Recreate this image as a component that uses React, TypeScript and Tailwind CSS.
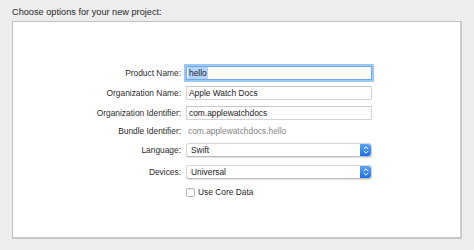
import React from "react";

function Stepper() {
  return (
    <div className="flex h-full w-[11px] items-center justify-center rounded-r-[3px] bg-gradient-to-b from-[#5aa2f7] to-[#1c6fe9]">
      <svg width="6" height="10" viewBox="0 0 6 10" fill="none">
        <path d="M1 3.8 L3 1.8 L5 3.8" stroke="white" strokeWidth="1" strokeLinecap="round" strokeLinejoin="round" />
        <path d="M1 6.2 L3 8.2 L5 6.2" stroke="white" strokeWidth="1" strokeLinecap="round" strokeLinejoin="round" />
      </svg>
    </div>
  );
}

function Row({ label, children, className = "" }: { label: string; children: React.ReactNode; className?: string }) {
  return (
    <div className={"flex items-center " + className}>
      <div className="w-[168px] pr-[0px] text-right text-[#2c2c2c]">{label}</div>
      <div className="ml-[5px] flex h-full w-[186px] items-center">{children}</div>
    </div>
  );
}

export default function App() {
  return (
    <div
      className="h-[250px] w-[474px] overflow-hidden bg-[#ededed] text-[8.4px] leading-none"
      style={{ fontFamily: '"Liberation Sans", Arial, sans-serif' }}
    >
      <div className="pl-[12px] pt-[7px] text-[9.2px] leading-[11px] text-[#2a2a2a]">Choose options for your new project:</div>
      <div className="ml-[12px] mt-[3px] h-[218px] w-[450px] border border-[#c2c2c2] border-r-[2px] border-b-[2px] border-r-[#cdcdcd] border-b-[#c6c6c6] bg-white pt-[44px]">
        <Row label="Product Name:" className="h-[14px]">
          <div className="flex h-[14px] w-full items-center border border-[#6ea8e8] bg-white pl-[1px] shadow-[0_0_0_2px_#9cc8f4]">
            <span className="bg-[#b3d4fc] px-[1px] py-[2px] text-[#1e1e1e]">hello</span>
          </div>
        </Row>
        <Row label="Organization Name:" className="mt-[6px] h-[14px]">
          <div className="flex h-[14px] w-full items-center border border-[#d4d4d4] border-t-[#c8c8c8] bg-white pl-[2px] text-[#222]">Apple Watch Docs</div>
        </Row>
        <Row label="Organization Identifier:" className="mt-[6px] h-[14px]">
          <div className="flex h-[14px] w-full items-center border border-[#d4d4d4] border-t-[#c8c8c8] bg-white pl-[2px] text-[#222]">com.applewatchdocs</div>
        </Row>
        <Row label="Bundle Identifier:" className="mt-[4px] h-[14px]">
          <div className="pl-[2px] text-[#858585]">com.applewatchdocs.hello</div>
        </Row>
        <Row label="Language:" className="mt-[5px] h-[14px]">
          <div className="flex h-[14px] w-full items-center justify-between rounded-[3px] border border-[#d6d6d6] border-b-[#bdbdbd] bg-white shadow-[0_1px_0_#e2e2e2]">
            <span className="pl-[4px] text-[#222]">Swift</span>
            <Stepper />
          </div>
        </Row>
        <Row label="Devices:" className="mt-[8px] h-[14px]">
          <div className="flex h-[14px] w-full items-center justify-between rounded-[3px] border border-[#d6d6d6] border-b-[#bdbdbd] bg-white shadow-[0_1px_0_#e2e2e2]">
            <span className="pl-[4px] text-[#222]">Universal</span>
            <Stepper />
          </div>
        </Row>
        <Row label="" className="mt-[6px] h-[14px]">
          <div className="flex items-center">
            <div className="h-[9px] w-[9px] rounded-[2px] border border-[#b8b8b8] bg-white shadow-[inset_0_1px_0_#f0f0f0]" />
            <span className="ml-[3px] text-[#2a2a2a]">Use Core Data</span>
          </div>
        </Row>
      </div>
    </div>
  );
}
